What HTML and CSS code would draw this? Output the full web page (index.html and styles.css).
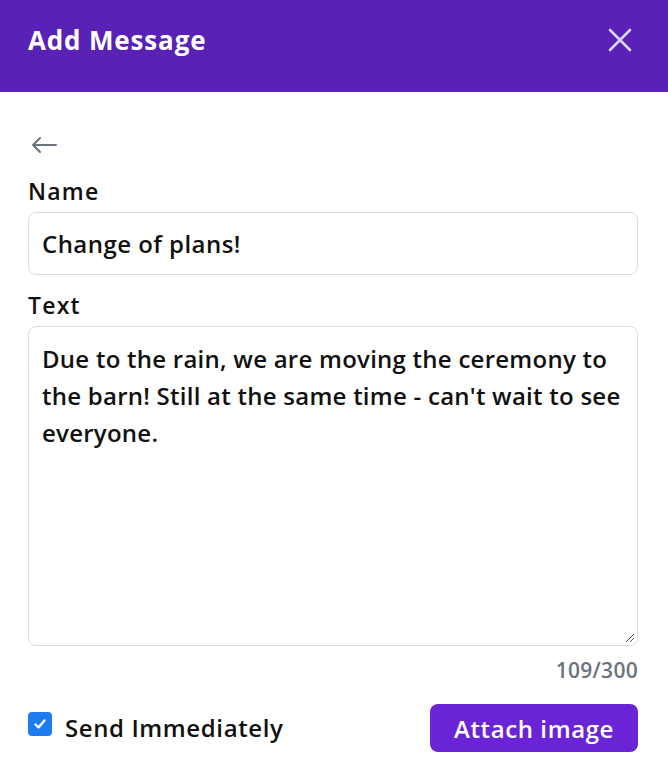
FILE: index.html
```html
<!DOCTYPE html>
<html>
<head>
<meta charset="utf-8">
<link rel="stylesheet" href="styles.css">
</head>
<body>
<div class="modal">
  <header class="header">
    <h1 class="title">Add Message</h1>
    <button class="close" aria-label="Close">
      <svg width="24" height="24" viewBox="0 0 24 24"><path d="M2 2 L22 22 M22 2 L2 22" stroke="#d9d6e8" stroke-width="2.6" stroke-linecap="round" fill="none"/></svg>
    </button>
  </header>
  <main class="body">
    <button class="back" aria-label="Back">
      <svg width="28" height="18" viewBox="0 0 28 18"><path d="M26 9 H3 M10 2 L3 9 L10 16" stroke="#6b7280" stroke-width="2" stroke-linecap="round" stroke-linejoin="round" fill="none"/></svg>
    </button>
    <label class="label">Name</label>
    <div class="input">Change of plans!</div>
    <label class="label label-text">Text</label>
    <div class="textarea">Due to the rain, we are moving the ceremony to the barn! Still at the same time - can't wait to see everyone.
      <svg class="grip" width="10" height="10" viewBox="0 0 10 10"><path d="M9 1 L1 9 M9 5 L5 9" stroke="#555" stroke-width="1" fill="none"/></svg>
    </div>
    <div class="counter">109/300</div>
    <div class="footer">
      <label class="check">
        <span class="box"><svg width="16" height="16" viewBox="0 0 16 16"><path d="M3.5 8.5 L6.5 11.5 L12.5 4.5" stroke="#fff" stroke-width="2.4" stroke-linecap="round" stroke-linejoin="round" fill="none"/></svg></span>
        <span class="check-text">Send Immediately</span>
      </label>
      <button class="attach">Attach image</button>
    </div>
  </main>
</div>
</body>
</html>
```
FILE: styles.css
```css
* { box-sizing: border-box; }
html, body { margin: 0; padding: 0; background: #fff; }
body { font-family: "Open Sans", "Lato", sans-serif; color: #111; width: 668px; height: 768px; overflow: hidden; }
.header {
  height: 92px; background: #5921b5;
  display: flex; align-items: center; justify-content: space-between;
  padding: 0 36px 12px 28px;
}
.title { margin: 0; color: #fff; font-size: 26px; font-weight: 700; letter-spacing: 0.85px; }
.close { background: none; border: 0; padding: 0; display: flex; }
.body { padding: 40px 30px 0 28px; display: flex; flex-direction: column; }
.back { background: none; border: 0; padding: 0 0 0 2px; display: flex; height: 26px; align-items: center; margin-bottom: 18px; }
.label { font-size: 23px; font-weight: 600; line-height: 30px; margin-bottom: 6px; letter-spacing: 1.2px; }
.label-text { margin-top: 15px; }
.input {
  height: 63px; border: 1px solid #dcdcdf; border-radius: 8px;
  padding: 0 13px; display: flex; align-items: center; font-size: 24px; font-weight: 600; letter-spacing: 0.45px;
}
.textarea {
  position: relative;
  height: 320px; border: 1px solid #dcdcdf; border-radius: 8px;
  padding: 13px 13px; font-size: 24px; font-weight: 600; line-height: 37px; letter-spacing: 0.25px;
}
.grip { position: absolute; right: 2px; bottom: 2px; }
.counter { text-align: right; color: #6b7280; font-size: 21px; font-weight: 600; margin-top: 12px; line-height: 24px; letter-spacing: 0.3px; }
.footer { display: flex; justify-content: space-between; align-items: center; margin-top: 22px; }
.check { display: flex; align-items: center; gap: 13px; font-size: 24px; font-weight: 600; letter-spacing: 0.6px; }
.box { width: 24px; height: 24px; border-radius: 4px; background: #1d7cf2; display: flex; align-items: center; justify-content: center; position: relative; top: -4px; }
.check-text { line-height: 30px; }
.attach {
  width: 208px; height: 48px; border: 0; border-radius: 8px; background: #6a24d6; color: #fff;
  font-family: inherit; font-size: 24px; font-weight: 600; letter-spacing: 0.6px;
}
```
